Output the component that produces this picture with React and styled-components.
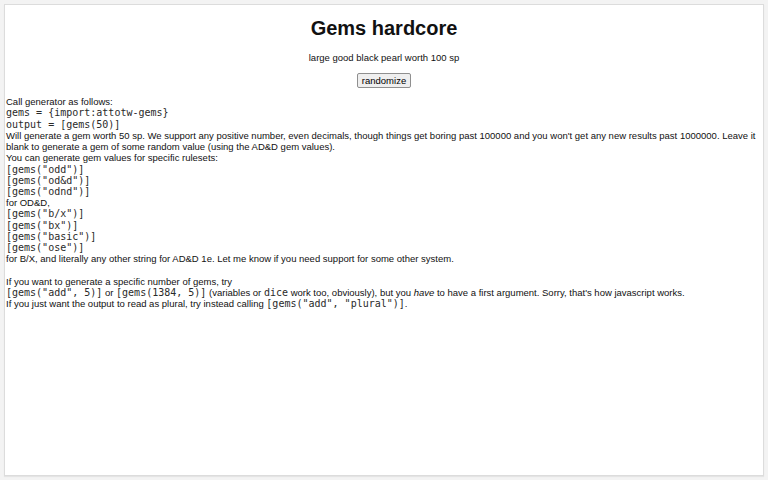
import React from "react";
import styled, { createGlobalStyle } from "styled-components";

const GlobalStyle = createGlobalStyle`
    html, body {
        margin: 0;
        padding: 0;
        background: #f3f3f3;
    }
    body {
        padding: 4px 4px 4px 4px;
        font-family: "Liberation Sans", Arial, sans-serif;
    }
`;

const Panel = styled.main`
    box-sizing: border-box;
    height: 472px;
    background: #fff;
    border: 1px solid #dcdcdc;
    box-shadow: 0 1px 1px rgba(0, 0, 0, 0.06);
    color: #111;
    font-size: 9.5px;
    line-height: 11.22px;
`;

const Header = styled.header`
    display: flex;
    flex-direction: column;
    align-items: center;
    padding-top: 12px;

    h1 {
        font-size: 20px;
        line-height: 23px;
        margin: 0;
        font-weight: bold;
    }
    p {
        margin: 12px 0 0;
    }
`;

const Button = styled.button`
    margin-top: 10px;
    font-family: "Liberation Sans", Arial, sans-serif;
    font-size: 9.5px;
    line-height: 11px;
    padding: 1px 4px;
    color: #000;
    background: #efefef;
    border: 1px solid #8f8f8f;
    border-radius: 2px;
`;

const Docs = styled.div`
    margin-top: 8px;
    padding-left: 1px;
`;

const Code = styled.code`
    font-family: "DejaVu Sans Mono", "Liberation Mono", monospace;
    font-size: 10px;
    color: #2a2a2a;
`;

const App = () => {
    return (
        <>
            <GlobalStyle />
            <Panel>
                <Header>
                    <h1>Gems hardcore</h1>
                    <p>large good black pearl worth 100 sp</p>
                    <Button>randomize</Button>
                </Header>
                <Docs>
                    Call generator as follows:
                    <br />
                    <Code>gems = {"{import:attotw-gems}"}</Code>
                    <br />
                    <Code>output = [gems(50)]</Code>
                    <br />
                    Will generate a gem worth 50 sp. We support any positive number, even decimals, though things get boring past 100000 and you won't get any new results past 1000000. Leave it blank to generate a gem of some random value (using the AD&amp;D gem values).
                    <br />
                    You can generate gem values for specific rulesets:
                    <br />
                    <Code>[gems("odd")]</Code>
                    <br />
                    <Code>[gems("od&amp;d")]</Code>
                    <br />
                    <Code>[gems("odnd")]</Code>
                    <br />
                    for OD&amp;D,
                    <br />
                    <Code>[gems("b/x")]</Code>
                    <br />
                    <Code>[gems("bx")]</Code>
                    <br />
                    <Code>[gems("basic")]</Code>
                    <br />
                    <Code>[gems("ose")]</Code>
                    <br />
                    for B/X, and literally any other string for AD&amp;D 1e. Let me know if you need support for some other system.
                    <br />
                    <br />
                    If you want to generate a specific number of gems, try
                    <br />
                    <Code>[gems("add", 5)]</Code> or <Code>[gems(1384, 5)]</Code> (variables or <Code>dice</Code> work too, obviously), but you <i>have</i> to have a first argument. Sorry, that's how javascript works.
                    <br />
                    If you just want the output to read as plural, try instead calling <Code>[gems("add", "plural")]</Code>.
                </Docs>
            </Panel>
        </>
    );
};

export default App;
